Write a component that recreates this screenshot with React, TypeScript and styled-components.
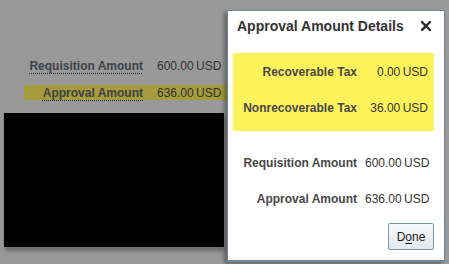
import styled, { createGlobalStyle } from 'styled-components'

const GlobalStyle = createGlobalStyle`
  html, body {
    margin: 0;
    padding: 0;
  }
  body {
    font-family: "Liberation Sans", Arial, sans-serif;
    font-size: 12px;
  }
`

const Page = styled.div`
  position: relative;
  width: 449px;
  height: 264px;
  overflow: hidden;
  background: #999999;
  padding-top: 58px;
  box-sizing: border-box;
`

const BackRow = styled.div<{ $highlight?: boolean }>`
  display: flex;
  align-items: center;
  height: ${p => (p.$highlight ? '15px' : '16px')};
  line-height: ${p => (p.$highlight ? '18px' : '16px')};
  margin-left: ${p => (p.$highlight ? '24px' : '0')};
  margin-top: ${p => (p.$highlight ? '11px' : '0')};
  width: ${p => (p.$highlight ? '210px' : '234px')};
  background: ${p => (p.$highlight ? '#a49c3d' : 'transparent')};
`

const BackLabel = styled.span<{ $width: number }>`
  width: ${p => p.$width}px;
  text-align: right;
  font-weight: bold;
  color: #3e4147;
  text-decoration: underline dotted #2f3033;
  text-underline-offset: 3px;
`

const BackValue = styled.span`
  margin-left: 14px;
  color: #2f3033;
  white-space: nowrap;
`

const Curtain = styled.div`
  margin: 13px 0 0 4px;
  width: 220px;
  height: 134px;
  background: #000;
  box-shadow: 1px 4px 4px rgba(0, 0, 0, 0.3);
`

const Dialog = styled.div`
  position: absolute;
  left: 227px;
  top: 10px;
  width: 218px;
  height: 252px;
  box-sizing: border-box;
  background: #fff;
  border: 1px solid #72879b;
  border-bottom-width: 2px;
  box-shadow: -3px 2px 4px rgba(0, 0, 0, 0.35);
  display: flex;
  flex-direction: column;
`

const Header = styled.div`
  display: flex;
  align-items: center;
  justify-content: space-between;
  height: 30px;
  padding: 0 13px 0 9px;
`

const Title = styled.h1`
  margin: 0;
  font-size: 14px;
  font-weight: bold;
  color: #333;
`

const Close = styled.button`
  border: 0;
  padding: 0;
  background: none;
  display: flex;
  cursor: pointer;
`

const Section = styled.div<{ $tax?: boolean }>`
  margin: ${p => (p.$tax ? '12px 10px 0 5px' : '14px 10px 0 5px')};
  padding: ${p => (p.$tax ? '1px 0 5px' : '0')};
  background: ${p => (p.$tax ? '#fff35c' : 'transparent')};
`

const Row = styled.div`
  display: flex;
  align-items: center;
  height: 36px;
  color: #333;
`

const Label = styled.span`
  width: 124px;
  text-align: right;
  font-weight: bold;
  color: #474747;
`

const Value = styled.span`
  width: 63px;
  margin-left: 8px;
  text-align: right;
  white-space: nowrap;
`

const Footer = styled.div`
  display: flex;
  justify-content: flex-end;
  padding: 6px 10px 0 0;
`

const Button = styled.button`
  width: 46px;
  height: 27px;
  padding: 0;
  font-family: "Liberation Sans", Arial, sans-serif;
  font-size: 12px;
  color: #1a1a1a;
  border: 1px solid #7d93a8;
  border-radius: 2px;
  background: linear-gradient(#f7f9fa, #e3e8ec);
  cursor: pointer;

  u {
    text-underline-offset: 2px;
  }
`

function Amount({ value }: { value: string }) {
  return <>{value}&#8201;USD</>
}

export default function App() {
  return (
    <>
      <GlobalStyle />
      <Page>
        <BackRow>
          <BackLabel $width={143}>Requisition Amount</BackLabel>
          <BackValue><Amount value="600.00" /></BackValue>
        </BackRow>
        <BackRow $highlight>
          <BackLabel $width={119}>Approval Amount</BackLabel>
          <BackValue><Amount value="636.00" /></BackValue>
        </BackRow>
        <Curtain />

        <Dialog>
          <Header>
            <Title>Approval Amount Details</Title>
            <Close aria-label="Close">
              <svg width="10" height="10" viewBox="0 0 10 10">
                <path d="M1 1L9 9M9 1L1 9" stroke="#2b2b2b" strokeWidth="2.4" strokeLinecap="square" />
              </svg>
            </Close>
          </Header>
          <Section $tax>
            <Row>
              <Label>Recoverable Tax</Label>
              <Value><Amount value="0.00" /></Value>
            </Row>
            <Row>
              <Label>Nonrecoverable Tax</Label>
              <Value><Amount value="36.00" /></Value>
            </Row>
          </Section>
          <Section>
            <Row>
              <Label>Requisition Amount</Label>
              <Value><Amount value="600.00" /></Value>
            </Row>
            <Row>
              <Label>Approval Amount</Label>
              <Value><Amount value="636.00" /></Value>
            </Row>
          </Section>
          <Footer>
            <Button>D<u>o</u>ne</Button>
          </Footer>
        </Dialog>
      </Page>
    </>
  )
}
